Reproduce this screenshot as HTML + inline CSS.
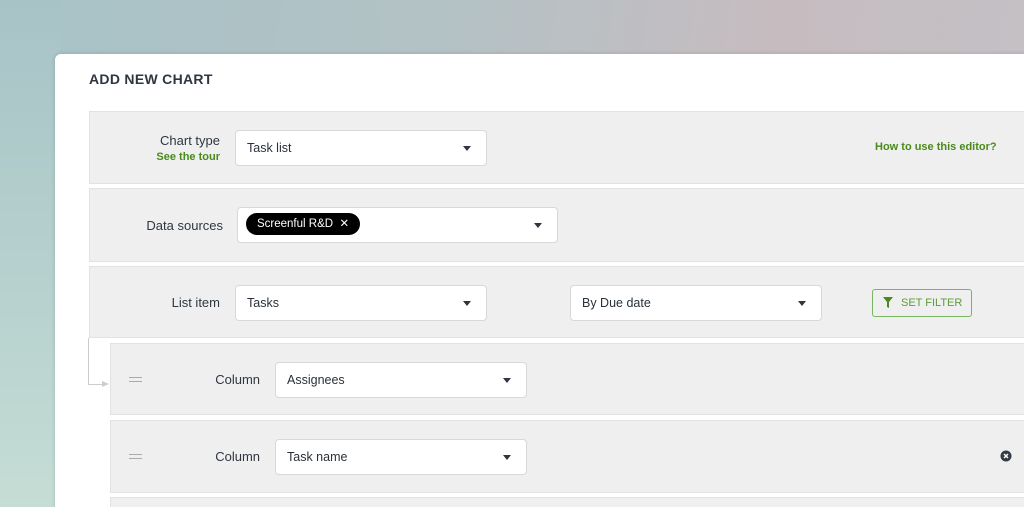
<!DOCTYPE html>
<html><head><style>
*{box-sizing:border-box;margin:0;padding:0}
html{width:1024px;height:507px;overflow:hidden}
body{width:1024px;height:507px;overflow:hidden;position:relative;font-family:"Liberation Sans",sans-serif;color:#2f3640;
background:linear-gradient(100deg,#a7c3c6 0%,#b3c2c5 40%,#c6bcc0 70%,#c3c1c6 100%);}
.bl{position:absolute;left:0;top:0;width:60px;height:507px;background:linear-gradient(180deg,#a7c3c6,#b8d2cf 60%,#c5ddd5)}
.panel{position:absolute;left:55px;top:54px;width:980px;height:460px;background:#fff;border-radius:6px;box-shadow:0 0 4px rgba(0,0,0,.15)}
h1{position:absolute;left:89px;top:71px;font-size:14px;font-weight:600;letter-spacing:.3px;color:#2f3640}
.row{position:absolute;background:#efefef;border:1px solid #e2e2e2}
.lbl{position:absolute;font-size:13px;text-align:right;color:#2f3640}
.sel{position:absolute;background:#fff;border:1px solid #d8d8d8;border-radius:4px;font-size:12.5px;padding-left:11px;line-height:34px;color:#2a313a}
.sel:after{content:"";position:absolute;right:15px;top:15px;border-left:4px solid transparent;border-right:4px solid transparent;border-top:5px solid #2f3640}
.g{color:#4a8a1c;font-weight:600;font-size:11px}
.drag{position:absolute;width:13px;height:5px;border-top:1px solid #aaa;border-bottom:1px solid #aaa}
</style></head><body>
<div class="bl"></div>
<div class="panel"></div>
<h1>ADD NEW CHART</h1>
<div class="row" style="left:89px;top:111px;width:950px;height:73px"></div>
<div class="lbl" style="left:120px;width:100px;top:133px">Chart type</div>
<div class="lbl g" style="left:120px;width:100px;top:151px">See the tour</div>
<div class="sel" style="left:235px;top:130px;width:252px;height:36px">Task list</div>
<div class="g" style="position:absolute;left:875px;top:141px">How to use this editor?</div>

<div class="row" style="left:89px;top:188px;width:950px;height:74px"></div>
<div class="lbl" style="left:100px;width:123px;top:218px">Data sources</div>
<div class="sel" style="left:237px;top:207px;width:321px;height:36px"><span style="display:inline-block;background:#000;color:#fff;border-radius:12px;line-height:22px;padding:0 11px;font-size:11.5px;vertical-align:middle;margin-top:-4px;margin-left:-3px">Screenful R&amp;D &nbsp;✕</span></div>

<div class="row" style="left:89px;top:266px;width:950px;height:72px"></div>
<div class="lbl" style="left:120px;width:100px;top:295px">List item</div>
<div class="sel" style="left:235px;top:285px;width:252px;height:36px">Tasks</div>
<div class="sel" style="left:570px;top:285px;width:252px;height:36px">By Due date</div>
<div style="position:absolute;left:872px;top:289px;width:100px;height:28px;border:1px solid #7ab563;border-radius:3px;color:#5c9c3a;font-size:11px;line-height:26px;padding-left:28px">SET FILTER</div>
<svg style="position:absolute;left:883px;top:297px" width="10" height="11"><path d="M0 0H10L6 5V11L4 10V5Z" fill="#4a8a1c"/></svg>

<div style="position:absolute;left:88px;top:338px;width:1px;height:47px;background:#ccc"></div>
<div style="position:absolute;left:88px;top:384px;width:14px;height:1px;background:#ccc"></div>
<div style="position:absolute;left:102px;top:381px;border-top:3.5px solid transparent;border-bottom:3.5px solid transparent;border-left:7px solid #ccc"></div>

<div class="row" style="left:110px;top:343px;width:930px;height:72px"></div>
<div class="drag" style="left:129px;top:377px"></div>
<div class="lbl" style="left:160px;width:100px;top:372px">Column</div>
<div class="sel" style="left:275px;top:362px;width:252px;height:36px">Assignees</div>

<div class="row" style="left:110px;top:420px;width:930px;height:73px"></div>
<div class="drag" style="left:129px;top:454px"></div>
<div class="lbl" style="left:160px;width:100px;top:449px">Column</div>
<div class="sel" style="left:275px;top:439px;width:252px;height:36px">Task name</div>
<svg style="position:absolute;left:1000px;top:450px" width="12" height="12"><circle cx="6" cy="6" r="5.5" fill="#333a44"/><path d="M4 4L8 8M8 4L4 8" stroke="#fff" stroke-width="1.5"/></svg>

<div class="row" style="left:110px;top:497px;width:930px;height:20px"></div>
</body></html>
